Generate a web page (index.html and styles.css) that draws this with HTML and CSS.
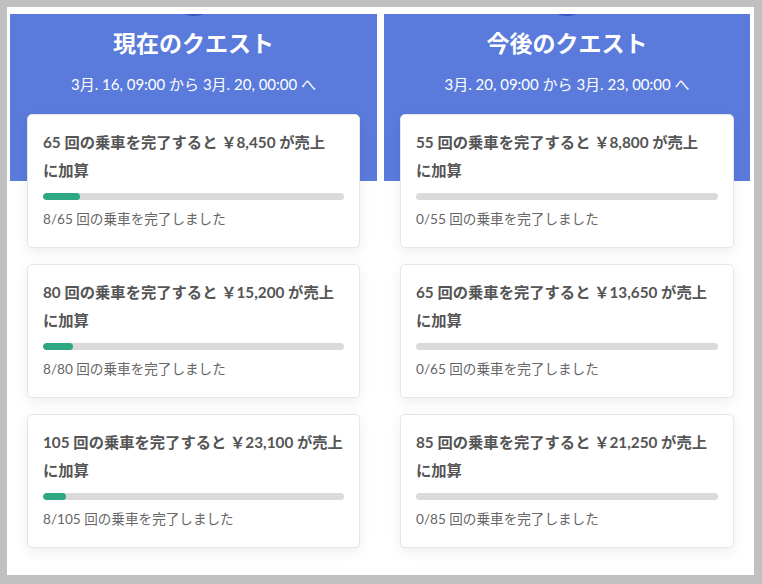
FILE: index.html
```html
<!DOCTYPE html>
<html lang="ja">
<head>
  <meta charset="UTF-8">
  <title>クエスト</title>
  <link rel="stylesheet" href="styles.css">
</head>
<body>
  <div class="panel">
    <div class="column">
      <div class="badge"></div>
      <h2 class="title">現在のクエスト</h2>
      <div class="period">3月. 16, 09:00 から 3月. 20, 00:00 へ</div>

      <div class="card">
        <div class="card-title">65 回の乗車を完了すると ￥8,450 が売上<br>に加算</div>
        <div class="bar"><div class="bar-fill" style="width: 12.3%;"></div></div>
        <div class="card-sub">8/65 回の乗車を完了しました</div>
      </div>

      <div class="card">
        <div class="card-title">80 回の乗車を完了すると ￥15,200 が売上<br>に加算</div>
        <div class="bar"><div class="bar-fill" style="width: 10%;"></div></div>
        <div class="card-sub">8/80 回の乗車を完了しました</div>
      </div>

      <div class="card">
        <div class="card-title">105 回の乗車を完了すると ￥23,100 が売上<br>に加算</div>
        <div class="bar"><div class="bar-fill" style="width: 7.6%;"></div></div>
        <div class="card-sub">8/105 回の乗車を完了しました</div>
      </div>
    </div>

    <div class="column">
      <div class="badge"></div>
      <h2 class="title">今後のクエスト</h2>
      <div class="period">3月. 20, 09:00 から 3月. 23, 00:00 へ</div>

      <div class="card">
        <div class="card-title">55 回の乗車を完了すると ￥8,800 が売上<br>に加算</div>
        <div class="bar"></div>
        <div class="card-sub">0/55 回の乗車を完了しました</div>
      </div>

      <div class="card">
        <div class="card-title">65 回の乗車を完了すると ￥13,650 が売上<br>に加算</div>
        <div class="bar"></div>
        <div class="card-sub">0/65 回の乗車を完了しました</div>
      </div>

      <div class="card">
        <div class="card-title">85 回の乗車を完了すると ￥21,250 が売上<br>に加算</div>
        <div class="bar"></div>
        <div class="card-sub">0/85 回の乗車を完了しました</div>
      </div>
    </div>
  </div>
</body>
</html>
```

FILE: styles.css
```css
* {
  box-sizing: border-box;
  margin: 0;
  padding: 0;
}

body {
  background-color: #c0c0c0;
  font-family: Lato, "Noto Sans CJK JP", sans-serif;
  color: #555;
}

.panel {
  display: grid;
  grid-template-columns: 367px 366px;
  gap: 7px;
  margin: 7px 8px 0 7px;
  height: 568px;
  padding: 7px 4px 0 3px;
  background-color: white;
  overflow: hidden;
}

.column {
  display: flex;
  flex-direction: column;
  gap: 16px;
  padding: 0 16px;
  overflow: hidden;
  background: linear-gradient(#5a7bdc 167px, transparent 167px);
}

.column:first-child {
  padding: 0 17px;
}

.badge {
  width: 52px;
  height: 52px;
  margin: -50px auto 0;
  border-radius: 50%;
  background-color: #3652c4;
}

.title {
  margin-top: -4px;
  font-size: 23px;
  line-height: 30px;
  font-weight: 700;
  color: white;
  text-align: center;
}

.period {
  margin-bottom: 4px;
  font-size: 15px;
  line-height: 20px;
  color: white;
  text-align: center;
}

.card {
  padding: 13px 15px 19px;
  background-color: white;
  border: 1px solid #e6e6e6;
  border-radius: 5px;
  box-shadow: 0 4px 14px rgba(0, 0, 0, 0.07);
}

.card-title {
  font-size: 15.3px;
  line-height: 28px;
  font-weight: 700;
  color: #555;
  white-space: nowrap;
}

.bar {
  height: 7px;
  margin-top: 9px;
  border-radius: 4px;
  background-color: #dadada;
  overflow: hidden;
}

.bar-fill {
  height: 100%;
  border-radius: 4px;
  background-color: #2ea883;
}

.card-sub {
  margin-top: 10px;
  font-size: 13.6px;
  line-height: 18px;
  color: #666;
}
```
